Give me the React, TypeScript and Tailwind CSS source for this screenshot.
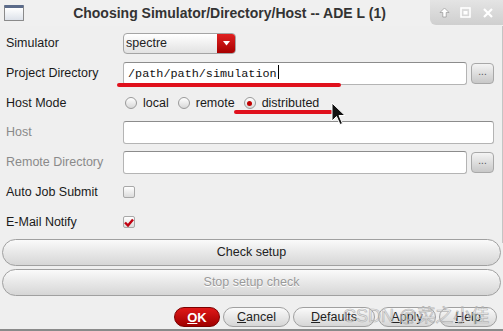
import { useState } from 'react'

const font = 'font-["Liberation_Sans",Arial,sans-serif]'

function Field({ value, browse }: { value?: string; browse?: boolean }) {
  return (
    <div className="flex flex-1 items-center gap-[4px]">
      <div className="flex h-[23px] flex-1 items-center rounded-[3px] border border-[#b4b4b4] border-t-[#8c8c8c] bg-white pl-[4px]">
        {value && (
          <span className="font-['Liberation_Mono',monospace] text-[11.8px] text-[#111]">
            {value}
            <span className="ml-px inline-block h-[14px] w-px translate-y-[2px] bg-black" />
          </span>
        )}
      </div>
      {browse && (
        <button className="flex h-[21px] w-[23px] items-center justify-center rounded-[4px] border border-[#a8a8a8] bg-gradient-to-b from-[#f4f4f4] to-[#c8c8c8] pb-[4px] text-[10px] text-[#555]">
          ...
        </button>
      )}
    </div>
  )
}

function Radio({ label, on }: { label: string; on?: boolean }) {
  return (
    <label className="flex items-center gap-[6px]">
      <span className="flex h-[12px] w-[12px] items-center justify-center rounded-full border border-[#9a9a9a] bg-gradient-to-b from-[#ffffff] to-[#d8d8d8]">
        {on && <span className="h-[5px] w-[5px] rounded-full bg-[#c00000]" />}
      </span>
      <span>{label}</span>
    </label>
  )
}

function Check({ on }: { on?: boolean }) {
  return (
    <span className="flex h-[12px] w-[12px] items-center justify-center rounded-[2px] border border-[#a8a8a8] bg-gradient-to-b from-white to-[#dcdcdc]">
      {on && (
        <svg width="10" height="9" viewBox="0 0 10 9">
          <path d="M1 4.5 L4 7.5 L9 1.5" fill="none" stroke="#c00010" strokeWidth="2.4" />
        </svg>
      )}
    </span>
  )
}

function Row({ label, dim, children }: { label: string; dim?: boolean; children?: React.ReactNode }) {
  return (
    <div className="flex h-[30px] items-center">
      <div className={`w-[117px] shrink-0 ${dim ? 'text-[#8a8a8a]' : 'text-[#1a1a1a]'}`}>{label}</div>
      <div className="flex flex-1 items-center">{children}</div>
    </div>
  )
}

const pill =
  'h-[20px] rounded-full border border-[#a0a0a0] bg-gradient-to-b from-[#fafafa] to-[#d6d6d6] text-[12.5px] text-[#222]'

export default function App() {
  const [dir] = useState('/path/path/simulation')

  return (
    <div className={`relative h-[331px] w-[503px] overflow-hidden bg-[#efefef] text-[12.5px] ${font}`}>
      {/* title bar */}
      <div className="relative flex h-[26px] items-center bg-[#f0f0f0]">
        <div className="ml-[4px] h-[16px] w-[20px] rounded-[1px] border border-[#8a8a8a] border-t-[3px] border-t-[#5b6b8a] bg-gradient-to-b from-white to-[#dde2ea]" />
        <div className="flex-1 pr-[68px] text-center text-[14px] font-bold text-[#333]">
          Choosing Simulator/Directory/Host -- ADE L (1)
        </div>
        <div className="absolute right-0 top-0 flex h-[25px] w-[73px] items-center justify-around rounded-bl-[6px] bg-gradient-to-b from-[#e4e4e4] to-[#cfcfcf] px-[4px]">
          <svg width="11" height="11" viewBox="0 0 11 11">
            <path d="M5.5 1 L10 5.5 H7.2 V10 H3.8 V5.5 H1 Z" fill="#fff" stroke="#888" strokeWidth="0.6" />
          </svg>
          <svg width="11" height="11" viewBox="0 0 11 11">
            <rect x="1" y="1" width="9" height="9" fill="none" stroke="#fff" strokeWidth="1.6" />
            <rect x="3.5" y="4" width="4" height="3.5" fill="#fff" />
          </svg>
          <svg width="12" height="12" viewBox="0 0 12 12">
            <path d="M2 2 L10 10 M10 2 L2 10" stroke="#fff" strokeWidth="2.2" />
          </svg>
        </div>
      </div>

      <div className="border-r border-[#c4c4c4] pb-[6px] pl-[6px] pr-[8px] pt-[2px]">
        <Row label="Simulator">
          <div className="flex h-[21px] w-[113px] items-center overflow-hidden rounded-[4px] border border-[#a4a4a4] bg-gradient-to-b from-white to-[#e2e2e2]">
            <span className="flex-1 pl-[2px] text-[12.5px] text-[#222]">spectre</span>
            <span className="flex h-full w-[18px] items-center justify-center bg-gradient-to-b from-[#e02020] to-[#a80000]">
              <svg width="7" height="5" viewBox="0 0 7 5">
                <path d="M0 0 H7 L3.5 4.5 Z" fill="#fff" />
              </svg>
            </span>
          </div>
        </Row>
        <Row label="Project Directory">
          <Field value={dir} browse />
        </Row>
        <Row label="Host Mode">
          <div className="flex items-center gap-[9px] pl-[2px] text-[#1a1a1a]">
            <Radio label="local" />
            <Radio label="remote" />
            <Radio label="distributed" on />
          </div>
        </Row>
        <div className="-mt-[1px]">
          <Row label="Host" dim>
            <Field />
          </Row>
          <Row label="Remote Directory" dim>
            <Field browse />
          </Row>
          <Row label="Auto Job Submit">
            <Check />
          </Row>
          <Row label="E-Mail Notify">
            <Check on />
          </Row>
        </div>
      </div>

      <div className="-mt-[4px] flex flex-col gap-[3px] px-[2px]">
        <button className={`${pill} h-[27px] w-full`}>Check setup</button>
        <button className={`${pill} h-[27px] w-full !text-[#9a9a9a] [text-shadow:0_1px_0_#fff]`}>
          Stop setup check
        </button>
      </div>

      <div className="mt-[11px] flex items-center justify-end gap-[3px] pr-[6px]">
        <button className="h-[20px] w-[46px] rounded-full border border-[#7a0000] bg-gradient-to-b from-[#e01818] to-[#a00000] text-[13px] font-bold text-white">
          <u>O</u>K
        </button>
        <button className={`${pill} w-[67px]`}>
          <u>C</u>ancel
        </button>
        <button className={`${pill} w-[82px]`}>
          <u>D</u>efaults
        </button>
        <button className={`${pill} w-[58px]`}>
          <u>A</u>pply
        </button>
        <button className={`${pill} w-[58px]`}>
          <u>H</u>elp
        </button>
      </div>

      <div className="absolute bottom-0 left-0 h-[2px] w-full bg-[#8a8a8a]" />

      {/* watermark */}
      <div className="pointer-events-none absolute left-[343px] top-[303px] text-[18px] text-transparent [-webkit-text-stroke:0.7px_#b8b8b8] font-['Liberation_Sans','Noto_Sans_CJK_SC',sans-serif]">
        CSDN @菜之小佳
      </div>

      {/* red annotation strokes */}
      <div className="absolute left-[117px] top-[83px] h-[4px] w-[224px] rounded-full bg-[#e0101c]" />
      <div className="absolute left-[234px] top-[110px] h-[4px] w-[99px] rounded-full bg-[#e0101c]" />

      {/* mouse pointer */}
      <svg className="absolute left-[331px] top-[102px]" width="16" height="26" viewBox="0 0 16 26">
        <path d="M1 1 L1 19 L5.5 14.5 L9 22.5 L11.5 21.5 L8 13.5 L14 13.5 Z" fill="#111" stroke="#fff" strokeWidth="1" />
      </svg>
    </div>
  )
}
